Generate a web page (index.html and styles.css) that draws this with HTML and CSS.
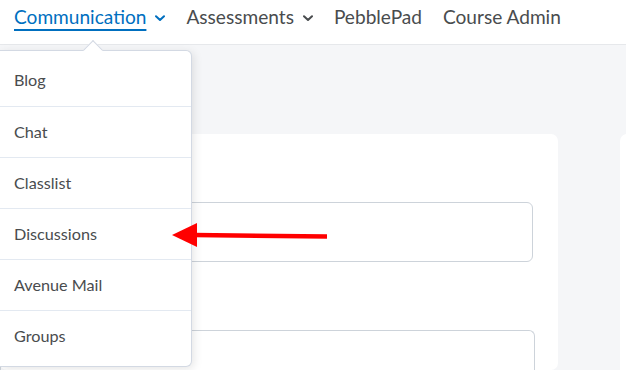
FILE: index.html
```html
<!DOCTYPE html>
<html>
<head>
<meta charset="utf-8">
<link rel="stylesheet" href="styles.css">
</head>
<body>
<nav class="nav">
  <a class="nav-item active">Communication<svg class="chev" viewBox="0 0 10 7" width="10" height="7"><path d="M1 1.2 L5 5 L9 1.2" fill="none" stroke="currentColor" stroke-width="2" stroke-linecap="round" stroke-linejoin="round"/></svg></a>
  <a class="nav-item">Assessments<svg class="chev" viewBox="0 0 10 7" width="10" height="7"><path d="M1 1.2 L5 5 L9 1.2" fill="none" stroke="currentColor" stroke-width="2" stroke-linecap="round" stroke-linejoin="round"/></svg></a>
  <a class="nav-item">PebblePad</a>
  <a class="nav-item">Course Admin</a>
</nav>
<main class="content">
  <section class="card">
    <div class="field"></div>
    <div class="field second"></div>
  </section>
  <section class="card side"></section>
</main>
<div class="menu">
  <div class="pointer"></div>
  <ul class="menu-list">
    <li>Blog</li>
    <li>Chat</li>
    <li>Classlist</li>
    <li>Discussions</li>
    <li>Avenue Mail</li>
    <li>Groups</li>
  </ul>
</div>
<svg class="arrow" width="160" height="30" viewBox="0 0 160 30">
  <polygon points="0,12 25,0 25,24" fill="#f00"/>
  <line x1="22" y1="12" x2="155" y2="13.5" stroke="#f00" stroke-width="4.5"/>
</svg>
</body>
</html>
```
FILE: styles.css
```css
* { box-sizing: border-box; }
html, body { margin: 0; padding: 0; }
body {
  width: 626px;
  height: 370px;
  overflow: hidden;
  background: #f5f6f8;
  font-family: Lato, "Open Sans", sans-serif;
  position: relative;
}
.nav {
  height: 45px;
  background: #fff;
  border-bottom: 1px solid #e6e8eb;
  display: flex;
  align-items: flex-start;
  padding: 5px 0 0 14px;
  gap: 21px;
}
.nav-item {
  font-size: 19.1px;
  color: #494c4e;
  display: flex;
  align-items: center;
  line-height: 24px;
}
.nav-item.active {
  color: #006fbf;
  text-decoration: underline;
  text-decoration-thickness: 2px;
  text-underline-offset: 5px;
}
.chev {
  margin-left: 9px;
  margin-top: 2px;
  color: #494c4e;
}
.active .chev { color: #006fbf; }
.content {
  display: flex;
  padding-top: 89px;
  gap: 62px;
  height: 325px;
  overflow: hidden;
}
.card {
  background: #fff;
  border-radius: 7px;
  width: 558px;
  height: 236px;
  flex-shrink: 0;
  padding: 68px 25px 0 0;
}
.card.side {
  width: 6px;
  border-radius: 7px 0 0 0;
}
.field {
  height: 60px;
  border: 1px solid #cdd3da;
  border-radius: 6px;
}
.field.second {
  margin-top: 68px;
  margin-right: -2px;
  height: 40px;
  border-bottom: none;
  border-radius: 6px 6px 0 0;
}
.menu {
  position: absolute;
  left: 0;
  top: 50px;
  width: 192px;
  background: #fff;
  border: 1px solid #d3d9e3;
  border-left: none;
  border-radius: 0 6px 6px 0;
  box-shadow: 2px 2px 10px rgba(0, 0, 0, 0.1);
  padding: 5px 0 5px;
}
.pointer {
  position: absolute;
  left: 86px;
  top: -8px;
  width: 14px;
  height: 14px;
  background: #fff;
  border-left: 1px solid #d3d9e3;
  border-top: 1px solid #d3d9e3;
  transform: rotate(45deg);
}
.menu-list {
  list-style: none;
  margin: 0;
  padding: 0;
  position: relative;
}
.menu-list li {
  height: 51px;
  line-height: 49px;
  padding-left: 14px;
  font-size: 16.2px;
  color: #494c4e;
  border-top: 1px solid #e3e9f1;
}
.menu-list li:first-child { border-top: none; height: 50px; line-height: 48px; }
.arrow {
  position: absolute;
  left: 172px;
  top: 223px;
}
```
